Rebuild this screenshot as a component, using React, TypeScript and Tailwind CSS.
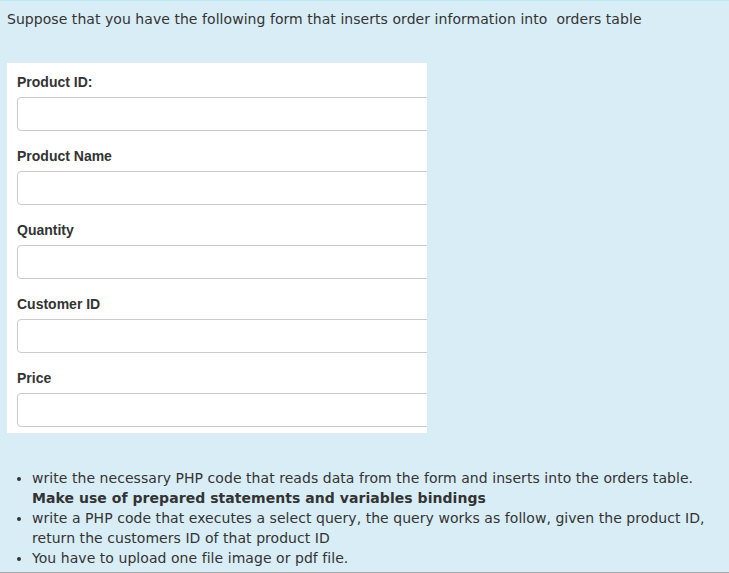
export default function App() {
  const fields = ["Product ID:", "Product Name", "Quantity", "Customer ID", "Price"];

  return (
    <div className="w-[729px] h-[573px] overflow-hidden bg-[#d9edf7] border-t border-b border-t-[#bce8f1] border-b-[#aaaaaa] text-[#333333] font-['Verdana','DejaVu_Sans',sans-serif] text-[14px] leading-[20px] tracking-[0.05px]">
      <p className="pl-[7px] pt-[8px]">
        Suppose that you have the following form that inserts order information into&nbsp; orders table
      </p>

      {/* Form box */}
      <div className="ml-[7px] mt-[34px] w-[420px] bg-white overflow-hidden pt-[9px] pb-[6px] pl-[10px] tracking-normal">
        {fields.map((f, i) => (
          <div key={f} className={i > 0 ? "mt-[15px]" : ""}>
            <div className="font-['Liberation_Sans',Arial,sans-serif] font-bold text-[14px] leading-[20px] text-[#333333]">
              {f}
            </div>
            <input
              type="text"
              className="mt-[5px] block w-[430px] h-[34px] border border-[#cccccc] rounded-[4px] bg-white"
            />
          </div>
        ))}
      </div>

      {/* Instructions */}
      <ul className="mt-[35px] pl-[32px] list-disc">
        <li>
          write the necessary PHP code that reads data from the form and inserts into the orders table.
          <br />
          <strong className="font-bold">Make use of prepared statements and variables bindings</strong>
        </li>
        <li>
          write a PHP code that executes a select query, the query works as follow, given the product ID,
          <br />
          return the customers ID of that product ID
        </li>
        <li>You have to upload one file image or pdf file.</li>
      </ul>
    </div>
  );
}
